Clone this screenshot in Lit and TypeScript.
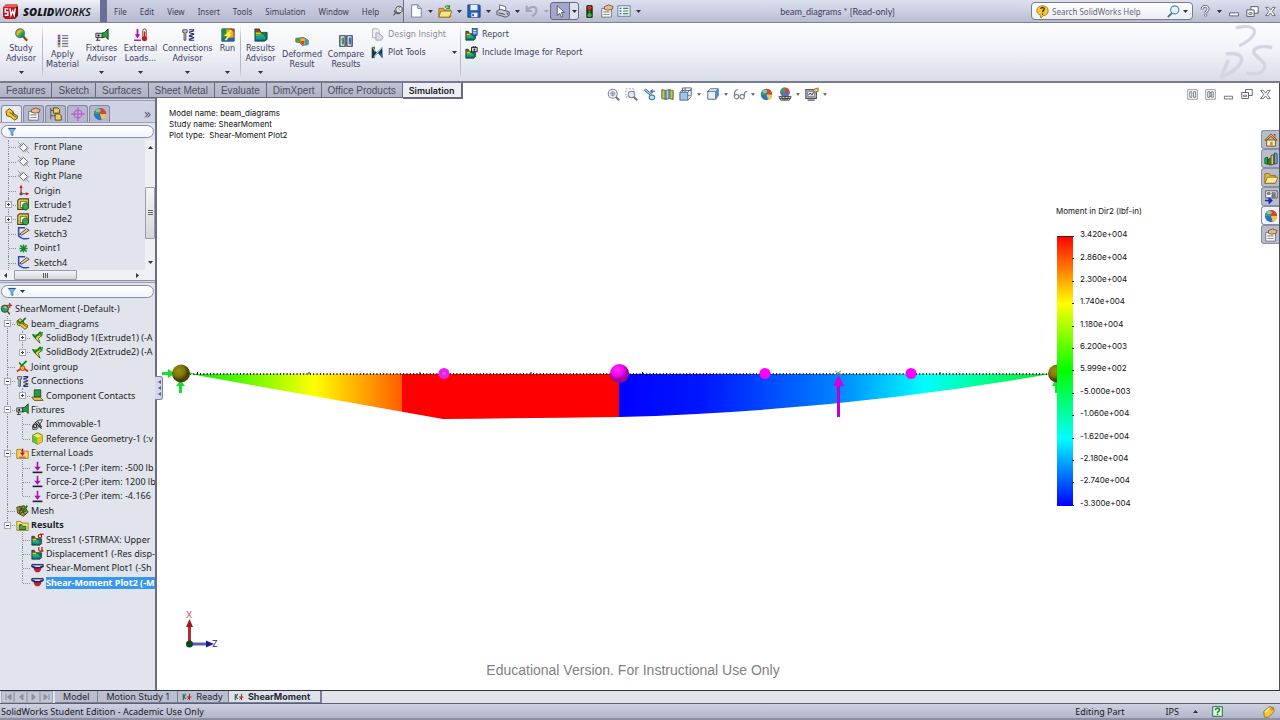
import { LitElement, html, svg, css, nothing, TemplateResult } from "lit";
import { customElement, property } from "lit/decorators.js";
import { classMap } from "lit/directives/class-map.js";

const rainbow = svg`<linearGradient id="rb" x1="0" y1="0" x2="1" y2="1"><stop offset="0" stop-color="#e02010"/><stop offset=".35" stop-color="#f5c800"/><stop offset=".6" stop-color="#20b040"/><stop offset="1" stop-color="#1040d0"/></linearGradient>`;
const plotBody = svg`<path d="M1 1h5l2 4h7v8l-3 2H1z" fill="#0c7a48" stroke="#123" stroke-width=".8"/><path d="M2 2h3l2 3H2z" fill="#e02010"/><path d="M2 5h5l2 2H2z" fill="#f7d000"/><path d="M2 7h8l2 3H2z" fill="#35c040"/><path d="M2 10h11v3H2z" fill="#1a90c8"/>`;
const plotSmall = svg`<path d="M1 4h3l2 3h7v6l-2 2H1z" fill="#0c7a48" stroke="#123" stroke-width=".8"/><path d="M2 5h2l1 2H2z" fill="#e02010"/><path d="M2 7h4l1 2H2z" fill="#f7d000"/><path d="M2 9h7l1 2H2z" fill="#35c040"/><path d="M2 11h9v2H2z" fill="#1a90c8"/>`;
const balls = svg`<circle cx="8" cy="8" r="7" fill="#2f6fd0"/><path d="M8 8V1a7 7 0 0 1 7 7z" fill="#e04038"/><path d="M8 8h7a7 7 0 0 1-5 6.700z" fill="#f0c840"/><path d="M8 8V1a7 7 0 0 0-7 7z" fill="#38a858"/><ellipse cx="6" cy="4" rx="3" ry="2" fill="#fff" opacity=".4"/>`;
const studyArrow = svg`<path d="M2 3v10M2 7l4 4M6 3l-3 5" stroke="#207048" stroke-width="1.800" fill="none"/><path d="M8 8h7M12 3v10M9 12l3-4" stroke="#b02030" stroke-width="1.600" fill="none"/>`;
const brick = svg`<path d="M1 5l4-3 4 3 1 3 4 2v3l-3 2-5-4-4-1z" fill="#f2cc30" stroke="#54430c"/><path d="M5 6l4 3M9 5v4l4 3" stroke="#54430c" fill="none"/>`;
const check = svg`<path d="M2 4l3 4L12 1" fill="none" stroke="#12801c" stroke-width="2.200"/>`;
const force = svg`<path d="M8 1v9" stroke="#b010b0" stroke-width="2"/><path d="M4 7h8l-4 5z" fill="#b010b0"/><path d="M2 14h12" stroke="#202030" stroke-width="2"/>`;
const funnel = svg`<path d="M2 2h12l-4.500 6v6l-3-1.500V8z" fill="#7db8ee" stroke="#2b62a8"/><path d="M3 2.500h10" stroke="#1d4d90" stroke-width="1.500"/>`;
const boltSpring = svg`<path d="M2 2h5v3H5.500v9h-2V5H2z" fill="#c8ccd4" stroke="#444"/><path d="M9 2h6M9 5l6-2M9 5l6 2M9 9l6-2M9 9l6 2M9 13l6-2M9 14h6" stroke="#223070" stroke-width="1.300" fill="none"/>`;
const fixture = svg`<path d="M1 6h8v5H1z" fill="#d0d8d0" stroke="#223"/><circle cx="4" cy="8.500" r="1.200"/><path d="M8 6l3-1 4-4v12l-3-3-4 1z" fill="#28a040" stroke="#0a3a18"/><path d="M1 14h5M3 11v3" stroke="#222"/>`;
const cube = svg`<path d="M2 5l3-3h9v8l-3 4H2z" fill="#e9f2fc" stroke="#49607e"/><path d="M2 5h9v9M11 5l3-3" fill="none" stroke="#49607e"/><path d="M11 5l3-3v8l-3 4z" fill="#4f8fd8"/>`;

const icons: Record<string, TemplateResult> = {
  logo: svg`<path d="M1 4l3-3h10l1 2v9l-3 3H3l-2-2z" fill="#b3121a"/><path d="M1 4l3-3h10l1 2-2 1z" fill="#e06060"/><path d="M13 4l2-1v9l-3 3z" fill="#7c0a10"/><path d="M6 5.500H3v3h2.500v3H2.500M7.500 5l1 6.500 1.500-4 1.500 4L12.500 5" fill="none" stroke="#fff" stroke-width="1.300"/>`,
  pin: svg`<circle cx="9.500" cy="6" r="4.500" fill="#e4e6ee" stroke="#555" stroke-width="1.300"/><circle cx="11" cy="5" r="2" fill="#fff" stroke="#777"/><path d="M3 7c1 4 4 5 8 4M5 10l-3 4" fill="none" stroke="#555" stroke-width="1.600"/>`,
  newDoc: svg`<path d="M3 1h7l4 4v10H3z" fill="#fdfeff" stroke="#5d7898"/><path d="M10 1v4h4" fill="#cfe0f2" stroke="#5d7898"/>`,
  open: svg`<path d="M1 5h5l1 2h7v8H1z" fill="#e8b93c" stroke="#8c6a14"/><path d="M3 8h13l-3 7H1z" fill="#fde287" stroke="#8c6a14"/><path d="M8 4c2-3 4-2 5 0M13 1v4H9.500" fill="none" stroke="#2a9a2a" stroke-width="1.600"/>`,
  save: svg`<path d="M1 1h13l1 1v13H1z" fill="#2e5fb4" stroke="#163a7c"/><path d="M4 1h8v6H4z" fill="#e6f0fb"/><path d="M5 10h7v5H5z" fill="#f4f6fa"/><path d="M6 11h2v3H6z" fill="#2e5fb4"/>`,
  print: svg`<path d="M4 1l7 2v5l-7-1z" fill="#fff" stroke="#667"/><path d="M1 8l4-2 10 3v4l-4 2-10-3z" fill="#c9ccd6" stroke="#444a5c"/><path d="M3 10l7 2" stroke="#333"/><circle cx="13" cy="11" r="1" fill="#2c70c0"/>`,
  undo: svg`<path d="M2 2v6h6M2 8C6 2 14 2 13 8c0 3-3 5-5 6" fill="none" stroke="#a2a6b8" stroke-width="2.400"/>`,
  cursor: svg`<path d="M4 1v12l3-3 2 5 2-1-2-5h4z" fill="#fff" stroke="#444a60"/>`,
  traffic: svg`<rect x="4" y="0" width="8" height="16" rx="2" fill="#26301e"/><circle cx="8" cy="3.500" r="2.600" fill="#e03020"/><circle cx="8" cy="8" r="1.600" fill="#6a6a20"/><circle cx="8" cy="12.500" r="2.600" fill="#30c040"/>`,
  props: svg`<path d="M2 5h11v10H2z" fill="#fbfbf4" stroke="#666b78"/><path d="M4 9h7M4 12h7" stroke="#8a8f9c" stroke-width="1.300"/><path d="M5 3l5-2 5 2-1 3-5 1-4-1z" fill="#e9b98c" stroke="#7a512c"/>`,
  options: svg`<path d="M1 2h14v12H1z" fill="#eef4fb" stroke="#54759c"/><path d="M7 5h6M7 8h6M7 11h6" stroke="#3e8e54" stroke-width="1.300"/><path d="M3 5h2M3 8h2M3 11h2" stroke="#3060a0" stroke-width="1.600"/>`,
  helpBall: svg`<path d="M8 1c4 0 7 2 7 6s-3 6-6 6l-3 3-1-4C2 11 1 9 1 7c0-4 3-6 7-6z" fill="#f6c73a" stroke="#9a7416"/><path d="M6 5c0-3 5-2 4 .5C9.500 7 8 7 8 9M8 10.500v1.500" fill="none" stroke="#3a2c08" stroke-width="1.600"/>`,
  lens: svg`<circle cx="9.500" cy="6" r="5" fill="#e8f2fc" stroke="#5b83ae" stroke-width="1.400"/><path d="M6 10l-5 5" stroke="#4b6a90" stroke-width="2.200"/>`,
  question: svg`<path d="M4 6c0-6 9-5 8 0-.5 2-3 2.500-3 5M9 12.500v2.500" fill="none" stroke="#555a6a" stroke-width="3.800"/><path d="M4 6c0-6 9-5 8 0-.5 2-3 2.500-3 4.500M9 13v1.500" fill="none" stroke="#fff" stroke-width="1.600"/>`,
  min: svg`<path d="M2 10.500h12v4H2z" fill="#fff" stroke="#555a6a" stroke-width="1.200"/>`,
  restore: svg`<path d="M6 2h9v8H6z" fill="#fff" stroke="#555a6a" stroke-width="1.200"/><path d="M1 6h9v8H1z" fill="#fff" stroke="#555a6a" stroke-width="1.200"/><path d="M3.500 9.500h4v2h-4z" fill="none" stroke="#555a6a"/>`,
  close: svg`<path d="M1 2h4l3 4 3-4h4l-4.500 6 4.500 6h-4l-3-4-3 4H1l4.500-6z" fill="#fff" stroke="#555a6a" stroke-width="1.200"/>`,
  paneL: svg`<path d="M1 1h14v14H1z" fill="#fff" stroke="#6a6f80"/><path d="M7 4H4v8h3zM9.500 4h3v8h-3z" fill="none" stroke="#6a6f80" stroke-width="1.300"/>`,
  paneR: svg`<path d="M1 1h14v14H1z" fill="#fff" stroke="#6a6f80"/><path d="M4 4h3v8H4zM9 4h3v8H9z" fill="none" stroke="#6a6f80" stroke-width="1.300"/><path d="M7 4l3 4-3 4" fill="none" stroke="#6a6f80"/>`,
  study: svg`<defs>${rainbow}</defs><circle cx="7" cy="6" r="5" fill="url(#rb)" stroke="#4a7c9c" stroke-width="1.400"/><path d="M10.500 9.500l4.500 5" stroke="#7a4a18" stroke-width="2.600"/>`,
  material: svg`<path d="M2 2h3M2 8h3" stroke="#c04030" stroke-width="2.400"/><path d="M2 5h3M2 11h3" stroke="#4060b0" stroke-width="2.400"/><path d="M2 14h3" stroke="#c8a020" stroke-width="2.400"/><path d="M7 2h7M7 5h7M7 8h7M7 11h7M7 14h7" stroke="#667" stroke-width="1.300"/>`,
  fixture,
  load: svg`<path d="M4 1v8" stroke="#b010b0" stroke-width="2"/><path d="M1 7h6l-3 5z" fill="#b010b0"/><path d="M0 14h8" stroke="#b010b0" stroke-width="1.600"/><rect x="10" y="1" width="4" height="10" rx="2" fill="#fff" stroke="#8a2020"/><circle cx="12" cy="12" r="3" fill="#c02020"/><path d="M12 4v8" stroke="#c02020" stroke-width="1.800"/>`,
  boltSpring,
  run: svg`<path d="M1 1h14v14H1z" fill="#e9b020" stroke="#234"/><path d="M1 1h5v14H1z" fill="#209048"/><path d="M1 11h14v4H1z" fill="#2060b8"/><path d="M14 1L6 8h4l-5 6" fill="none" stroke="#fff04a" stroke-width="2.200"/><path d="M10 1h5v4z" fill="#d04020"/>`,
  results: plotBody,
  deformed: svg`<path d="M1 5l9-1 5 3v5l-7 1-2-3-5-1z" fill="#f0b020" stroke="#555"/><path d="M1 5h5v4l-5-1z" fill="#30a850"/><path d="M6 8h5l-1 4-3-1z" fill="#e04020"/><path d="M11 6l4 1v5l-3 1z" fill="#2aa0c8"/>`,
  compare: svg`<path d="M1 2h6v12H1zM9 2h6v12H9z" fill="#fff" stroke="#233050" stroke-width="1.400"/><path d="M3 4h3v8H3z" fill="#2a9a60"/><path d="M11 4h3v8h-3z" fill="#2a70c0"/><path d="M3 5h2v2H3zM11 9h2v2h-2z" fill="#e06020"/>`,
  insight: svg`<path d="M2 1h6l2 2v9H2z" fill="#f1f2f6" stroke="#9a9eac"/><path d="M6 6h3l6 5-2 4H6z" fill="#d8dae2" stroke="#9a9eac"/>`,
  plotTools: svg`<path d="M1 1h4v14H1z" fill="#1c9048"/><path d="M1 2l6 6 7-7v14l-5-6-8 6z" fill="#18344a"/><path d="M1 1l4 3v4z" fill="#e0a020"/><path d="M9 9l5 6V9z" fill="#2a60c0"/><path d="M14 1L4 13" stroke="#9ad0e8" stroke-width="1.600"/>`,
  report: svg`${plotSmall}<path d="M9 0h6v9H9z" fill="#4a86d8" stroke="#1a3a78"/><path d="M10 3h4M10 6h4" stroke="#fff"/>`,
  imageReport: svg`${plotSmall}<rect x="8" y="2" width="7" height="5" fill="#ddd" stroke="#111"/><path d="M10 2V0h3v2" fill="none" stroke="#111"/><circle cx="11.500" cy="4.500" r="1.300" fill="#333"/>`,
  zoomFit: svg`<circle cx="7" cy="7" r="5.500" fill="#eef4fa" stroke="#7a8498" stroke-width="1.300"/><path d="M7 3.500v7M3.500 7h7M5 5h4v4H5z" stroke="#8a94a8" fill="none"/><path d="M11 11l4 4" stroke="#6a7488" stroke-width="2.400"/>`,
  zoomArea: svg`<path d="M1 1h10v10H1z" fill="none" stroke="#7a8498" stroke-dasharray="2 2"/><circle cx="8" cy="8" r="4" fill="#dce8f4" stroke="#7a8498" stroke-width="1.300"/><path d="M11 11l4 4" stroke="#6a7488" stroke-width="2.400"/>`,
  prevView: svg`<path d="M1 2l8 7M3 1l8 7" stroke="#3a7ab4" stroke-width="1.300"/><ellipse cx="11" cy="11.500" rx="3.500" ry="3" fill="#bfe0f6" stroke="#3a7ab4" stroke-width="1.300"/><path d="M15 4H10M12 2l-2.500 2L12 6" stroke="#4a5a78" fill="none" stroke-width="1.300"/>`,
  section: svg`<path d="M1 2l5 1 4-1 5 1v11l-5-1-4 1-5-1z" fill="#4f9088" stroke="#5a5020"/><path d="M3 3v10M13 3v10" stroke="#e4be30" stroke-width="2.400"/><path d="M8 3v10" stroke="#a8d0e8" stroke-width="2"/>`,
  orient: svg`<path d="M4 1h10v9H4z" fill="#f2f6fb" stroke="#5a6478"/><path d="M1 6h9v9H1z" fill="#9cc4ee" stroke="#49607e"/><path d="M1 6l4-4M10 6l4-4M10 15l4-4M7 1v5M4 4h10" stroke="#5a6478" fill="none"/>`,
  cube,
  glasses: svg`<circle cx="4" cy="11" r="2.500" fill="none" stroke="#7a8090" stroke-width="1.300"/><circle cx="10.500" cy="11" r="2.500" fill="none" stroke="#7a8090" stroke-width="1.300"/><path d="M1.500 10c0-4 1-7 4-7M13 10.500c0-3 0-6 3-5" fill="none" stroke="#7a8090" stroke-width="1.300"/>`,
  balls,
  scene: svg`<circle cx="8" cy="6" r="5.500" fill="#e04038"/><path d="M8 6V.5A5.500 5.500 0 0 0 2.500 6z" fill="#38a858"/><path d="M2.500 6h11l-2 4h-7z" fill="#4a78c8"/><path d="M1 11h14l-2 4H3z" fill="#fff" stroke="#333"/><path d="M4 11l2 4M8 11v4M12 11l-2 4M2 13h12" stroke="#333" stroke-width="1.100"/>`,
  viewSet: svg`<path d="M1 3h12v10H1z" fill="#c9d2de" stroke="#4a5464" stroke-width="1.300"/><path d="M3 5h8v6H3z" fill="#eef0f4" stroke="#777"/><path d="M4 9l2-2 2 2 2-3M3 15h8" fill="none" stroke="#4a5464" stroke-width="1.200"/><path d="M9 3l6-2v4l-4 1z" fill="#f0cc80" stroke="#7a612c"/>`,
  brick,
  config: svg`<path d="M2 1v13M2 4h4M2 10h5" stroke="#445" fill="none"/><path d="M5 1h5l2 2v4H5z" fill="#e8d060" stroke="#54430c"/><path d="M7 8h5l2 2v5H7z" fill="#e8d060" stroke="#54430c"/>`,
  dim: svg`<circle cx="8" cy="8" r="4.500" fill="none" stroke="#c060d8" stroke-width="1.500"/><path d="M8 0v16M0 8h16" stroke="#c060d8" stroke-width="1.500"/>`,
  funnel,
  plane: svg`<path d="M8 3l5 5-5 5-5-5z" fill="#f4f6fa" stroke="#555"/><path d="M1 1l5 5M10 10l5 5M1 8l6-6M9 14l6-6" stroke="#777" stroke-width=".8"/>`,
  origin: svg`<path d="M5 3v9h8" fill="none" stroke="#c01c1c" stroke-width="1.400"/><path d="M5 1L3 5h4zM15 12l-4-2v4z" fill="#c01c1c"/><circle cx="5" cy="12" r="2" fill="#555"/>`,
  extrude: svg`<path d="M1 3l2-2h11v10l-3 3H1z" fill="#f3dd78" stroke="#4c420e" stroke-width="1.400"/><path d="M4 4h8v8H4z" fill="#fff8c8" stroke="#4c420e"/><path d="M7 8l3-2 4 2v5l-3 2-4-2z" fill="#38a848" stroke="#0e5020"/>`,
  sketch: svg`<path d="M10 1H2v10c4 4 9 4 13 3" fill="none" stroke="#2a48b8" stroke-width="1.800"/><path d="M3 9l9-7 3 2-9 6z" fill="#f0cc80" stroke="#333"/>`,
  point: svg`<path d="M8 3v10M3 8h10M4 4l8 8M12 4l-8 8" stroke="#1a8a30" stroke-width="1.800"/>`,
  studyRoot: svg`<circle cx="6" cy="7" r="4.500" fill="#2aa06a" stroke="#333"/><path d="M3 5l4-1 2 3z" fill="#f0d020"/><path d="M9 10l3 4" stroke="#703c10" stroke-width="2"/><path d="M9 3h6M12 0v6" stroke="#c02020" stroke-width="1.600"/>`,
  part: svg`${brick}<g>${check}</g>`,
  solid: svg`<path d="M3 5h11l-5 4 2 6-5-5z" fill="#f2d840" stroke="#3c4c10"/><path d="M10 2l5-1-2 6z" fill="#2a9a30"/>${check}`,
  joint: svg`<circle cx="8" cy="10" r="3" fill="#f0b020" stroke="#843"/><path d="M1 14l5-3M15 14l-5-3" stroke="#d04020" stroke-width="2.400"/><path d="M4 3l3 4 6-6" fill="none" stroke="#12801c" stroke-width="2"/>`,
  contact: svg`<path d="M4 1h8v9H4z" fill="#2a9a40" stroke="#0e4a1c"/><path d="M1 10h10l4 4H4z" fill="#e8c850" stroke="#54430c"/>`,
  immovable: svg`<path d="M2 9l6-6 6-1-2 4-5 8-5 0z" fill="#ddd" stroke="#333"/><circle cx="5" cy="10" r="2" fill="none" stroke="#222" stroke-width="1.400"/><path d="M8 4l5 7M5 5l8 8" stroke="#222" stroke-width="1.300"/>`,
  refGeo: svg`<path d="M2 4l6-3 6 3v8l-6 3-6-3z" fill="#f0ec60" stroke="#4c6010"/><path d="M8 7l6-3v8l-6 3z" fill="#e8c820"/><path d="M2 4l6 3v8l-6-3z" fill="#68c038"/>`,
  folderLoad: svg`<path d="M1 3h5l1 2h8v9H1z" fill="#f8d858" stroke="#9a7414"/><path d="M8 2v6" stroke="#c01060" stroke-width="2"/><path d="M5 7h6l-3 4z" fill="#c01060"/><path d="M4 12.500h8" stroke="#c01060"/>`,
  force,
  mesh: svg`<path d="M1 4l9-2 5 8-6 5-7-4z" fill="#a0983c" stroke="#33300c"/><path d="M4 3l7 10M3 8l9-3M4 12l9-4M8 3l-4 8" stroke="#33300c"/><path d="M7 6l2 2 5-6" fill="none" stroke="#12801c" stroke-width="2.200"/>`,
  folderRes: svg`<path d="M1 3h5l1 2h8v9H1z" fill="#f8e070" stroke="#9a7414"/><path d="M4 7h3l1 2h4v4H4z" fill="#40a850" stroke="#0c5024"/>`,
  stress: svg`${plotSmall}<circle cx="11" cy="4" r="2" fill="#fff" stroke="#c01818" stroke-width="1.600"/><path d="M11 1.500h4.500" stroke="#c01818" stroke-width="1.600"/>`,
  disp: svg`${plotSmall}<path d="M9.500 0v3c0 3 4 3 4 0V0v5h2" fill="none" stroke="#c01818" stroke-width="1.600"/>`,
  shear: svg`<path d="M1 4.500h14" stroke="#888"/><path d="M1 3v3h3l4 2 4-2h3V3z" fill="none" stroke="#1c2470" stroke-width="1.200"/><path d="M3 6h10c0 9-10 9-10 0z" fill="#c02028"/><path d="M1 5l4 2 3 0 3 0 4-2" fill="none" stroke="#1c2470" stroke-width="1.800"/>`,
  home: svg`<path d="M3 8h10v7H3z" fill="#fdf0b8" stroke="#6a4a14"/><path d="M1 8l7-7 7 7-1 1-6-5-6 5z" fill="#f0b838" stroke="#6a4a14"/><path d="M11 1h2v4z" fill="#c02020"/><path d="M7 10h3v5H7z" fill="#c89040"/>`,
  library: svg`<path d="M1 7l3-1v8l-3-1zM5 8l2-1v8l-2-1z" fill="#38a848" stroke="#0e5020"/><path d="M8 4l3-1v11l-3 1z" fill="#f0c838" stroke="#54430c"/><path d="M12 1l3 1v11l-3 1z" fill="#68a8e0" stroke="#204880"/>`,
  folder: svg`<path d="M1 3h5l1 2h6v9H1z" fill="#e8b93c" stroke="#8c6a14"/><path d="M4 7h12l-3 7H1z" fill="#fdea9c" stroke="#8c6a14"/>`,
  palette: svg`<path d="M2 1h13v8H2z" fill="#fff" stroke="#445"/><path d="M4 3h3v2H4zM9 3h4v2H9zM9 6h4v2H9z" fill="#9ab0a0" stroke="#445" stroke-width=".8"/><path d="M1 12h7M6 9.500L9 12l-3 3z" stroke="#1a30b0" stroke-width="1.600" fill="#1a30b0"/>`,
  tabStudy: studyArrow,
  helpBox: svg`<path d="M1 1h14v14H1z" fill="#e4f6e4" stroke="#28684c" stroke-width="1.400"/><path d="M5 6c0-4 7-3 6 0-.5 2-3 2-3 4M8 11v2" fill="none" stroke="#188a2c" stroke-width="2.200"/>`,
  tag: svg`<path d="M2 8l7-6 5 1 1 5-7 7-5 0z" fill="#f4c634" stroke="#8c6a14"/><circle cx="12" cy="5" r="1.300" fill="#fff" stroke="#8c6a14"/><path d="M4 9l5-5" stroke="#fff0a0" stroke-width="1.600"/>`,
};

@customElement("sw-icon")
class SwIcon extends LitElement {
  @property() name = "";
  @property({ type: Number }) size = 13;
  static styles = css`
    :host { display: inline-flex; flex: none; }
    svg { display: block; }
  `;
  render() {
    return html`<svg viewBox="0 0 16 16" width=${this.size} height=${this.size} aria-hidden="true">${icons[this.name]}</svg>`;
  }
}

const icon = (name: string, size = 13) => html`<sw-icon name=${name} size=${size}></sw-icon>`;
const caret = html`<svg class="caret" width="5" height="3" viewBox="0 0 5 3" aria-hidden="true"><path d="M0 0h5L2.500 3z" fill="currentColor"/></svg>`;

type Node = { text: string; icon: string; level: number; box?: "+" | "-"; guide?: boolean; bold?: boolean; selected?: boolean; last?: boolean };

@customElement("sw-tree")
class SwTree extends LitElement {
  @property({ attribute: false }) nodes: Node[] = [];
  static styles = css`
    :host { display: grid; grid-auto-rows: 1fr; overflow: hidden; }
    .row { display: flex; align-items: center; min-height: 0; white-space: nowrap; font: 9px/12px "Noto Sans", sans-serif; color: #1c1e26; }
    .rail { align-self: stretch; width: 15px; flex: none; display: flex; align-items: center; justify-content: center; position: relative; }
    .rail.line::before { content: ""; position: absolute; left: 7px; top: 0; bottom: 0; border-left: 1px dotted #8a8e9a; }
    .rail.line.end::before { bottom: 50%; }
    .rail.stub::after { content: ""; position: absolute; left: 8px; right: 0; top: 50%; border-top: 1px dotted #8a8e9a; }
    .box { position: relative; z-index: 1; box-sizing: border-box; width: 7px; height: 7px; border: 1px solid #a4a8b4; background: #fff; padding: 0; display: grid; place-items: center; }
    .box svg { display: block; }
    .rail + sw-icon { margin-left: 1px; }
    .label { margin-left: 2px; }
    :host(.roomy) .label { margin-left: 4px; }
    .bold { font-weight: 700; }
    .selected .label { background: #3797f0; color: #fff; font-weight: 700; flex: 1; }
  `;
  private rail(n: Node, depth: number) {
    const own = depth === n.level - 1;
    return html`<span class=${classMap({ rail: true, line: own || n.guide !== false, stub: own, end: own && !!n.last })}>
      ${own && n.box
        ? html`<button class="box" aria-label=${n.box === "+" ? "Expand" : "Collapse"}><svg width="5" height="5" viewBox="0 0 5 5"><path d=${n.box === "+" ? "M1 2.500h3M2.500 1v3" : "M1 2.500h3"} stroke="#445" fill="none"/></svg></button>`
        : nothing}
    </span>`;
  }
  render() {
    return this.nodes.map(
      (n) => html`<div class=${classMap({ row: true, selected: !!n.selected, bold: !!n.bold })}>
        ${Array.from({ length: n.level }, (_, d) => this.rail(n, d))}${icon(n.icon, 13)}<span class="label">${n.text}</span>
      </div>`
    );
  }
}

const featureTree: Node[] = [
  { text: "Front Plane", icon: "plane", level: 1 },
  { text: "Top Plane", icon: "plane", level: 1 },
  { text: "Right Plane", icon: "plane", level: 1 },
  { text: "Origin", icon: "origin", level: 1 },
  { text: "Extrude1", icon: "extrude", level: 1, box: "+" },
  { text: "Extrude2", icon: "extrude", level: 1, box: "+" },
  { text: "Sketch3", icon: "sketch", level: 1 },
  { text: "Point1", icon: "point", level: 1 },
  { text: "Sketch4", icon: "sketch", level: 1 },
];

const studyTree: Node[] = [
  { text: "ShearMoment (-Default-)", icon: "studyRoot", level: 0 },
  { text: "beam_diagrams", icon: "part", level: 1, box: "-" },
  { text: "SolidBody 1(Extrude1) (-A", icon: "solid", level: 2, box: "+" },
  { text: "SolidBody 2(Extrude2) (-A", icon: "solid", level: 2, box: "+", last: true },
  { text: "Joint group", icon: "joint", level: 1 },
  { text: "Connections", icon: "boltSpring", level: 1, box: "-" },
  { text: "Component Contacts", icon: "contact", level: 2, box: "+", last: true },
  { text: "Fixtures", icon: "fixture", level: 1, box: "-" },
  { text: "Immovable-1", icon: "immovable", level: 2 },
  { text: "Reference Geometry-1 (:v", icon: "refGeo", level: 2, last: true },
  { text: "External Loads", icon: "folderLoad", level: 1, box: "-" },
  { text: "Force-1 (:Per item: -500 lb", icon: "force", level: 2 },
  { text: "Force-2 (:Per item: 1200 lb", icon: "force", level: 2 },
  { text: "Force-3 (:Per item: -4.166", icon: "force", level: 2, last: true },
  { text: "Mesh", icon: "mesh", level: 1 },
  { text: "Results", icon: "folderRes", level: 1, box: "-", bold: true, last: true },
  { text: "Stress1 (-STRMAX: Upper", icon: "stress", level: 2, guide: false },
  { text: "Displacement1 (-Res disp-", icon: "disp", level: 2, guide: false },
  { text: "Shear-Moment Plot1 (-Sh", icon: "shear", level: 2, guide: false },
  { text: "Shear-Moment Plot2 (-M", icon: "shear", level: 2, guide: false, last: true, selected: true },
];

const legend = ["3.420e+004", "2.860e+004", "2.300e+004", "1.740e+004", "1.180e+004", "6.200e+003", "5.999e+002", "-5.000e+003", "-1.060e+004", "-1.620e+004", "-2.180e+004", "-2.740e+004", "-3.300e+004"];

@customElement("app-root")
class AppRoot extends LitElement {
  static styles = css`
    :host { display: flex; flex-direction: column; height: 100vh; overflow: hidden; color: #3a3d5e; font: 9px "DejaVu Sans Condensed", sans-serif; --edge: #666a7c; }
    button, input { font: inherit; color: inherit; margin: 0; }
    button { background: none; border: 0; padding: 0; display: flex; align-items: center; white-space: nowrap; }
    .caret { flex: none; color: #2c3044; }

    .top { display: flex; align-items: center; height: 22px; flex: none; border-bottom: 1px solid #7c8094; background: linear-gradient(#dcdfee, #cdd0e2 50%, #b9bccf); }
    .brand { display: flex; align-items: center; gap: 4px; width: 100px; height: 22px; box-sizing: border-box; padding-left: 2px; background: linear-gradient(#f0f1f8, #d0d3e2 60%, #c0c3d4); color: #15161c; font: italic 600 11px "Open Sans", sans-serif; }
    .brand b { font-weight: 800; }
    .strip { width: 7px; height: 22px; background: #6b6f98; }
    .menus { display: flex; align-items: center; gap: 13px; width: 297px; height: 22px; box-sizing: border-box; padding: 0 4px 0 7px; border-right: 1px solid #6c7084; background: linear-gradient(#cfd2e4, #b8bbcf); font: 8px "Noto Sans", sans-serif; }
    .menus sw-icon { margin-left: auto; }
    .quick { display: flex; align-items: center; height: 22px; padding-left: 5px; }
    .split { width: 29px; gap: 5px; }
    .split.off .caret { color: #a0a4b4; }
    .pick { box-sizing: border-box; width: 29px; height: 18px; margin: 0 4px 0 -4px; border: 1px solid #666a88; border-radius: 3px; background: linear-gradient(90deg, #a4a8c8 18px, #666a88 18px, #666a88 19px, #dfe1ee 19px); padding-left: 3px; gap: 5px; }
    .single { width: 17px; }
    .title { flex: 1; text-align: center; font: 9px Lato, sans-serif; padding-right: 2px; }
    .search { display: flex; align-items: center; gap: 3px; box-sizing: border-box; width: 162px; height: 18px; border: 1px solid #777b8e; border-radius: 4px; background: linear-gradient(#fff, #eceef5); padding: 0 4px; }
    .search input { flex: 1; min-width: 0; border: 0; padding: 0; outline: 0; background: none; font: 8px "Noto Sans", sans-serif; }
    .search input::placeholder { color: #666a76; opacity: 1; }
    .window { display: flex; align-items: center; gap: 6px; padding: 0 4px 0 6px; }

    .ribbon { display: flex; height: 58px; flex: none; border-bottom: 2px solid #777b90; background: linear-gradient(#fcfcfe, #f3f4f9 45%, #d9dbe7); }
    .big { flex-direction: column; justify-content: flex-start; box-sizing: border-box; padding: 5px 0 7px; line-height: 10px; text-align: center; height: 58px; }
    .big .words { margin-top: 1px; flex: 1; }
    .big.low { padding-top: 11px; }
    .w25 { width: 25px; } .w39 { width: 39px; } .w42 { width: 42px; } .w44 { width: 44px; } .w55 { width: 55px; }
    .rule { width: 1px; flex: none; background: linear-gradient(#fff, #b4b7c8 30%, #b4b7c8 80%, #eee); }
    .stack { display: flex; flex-direction: column; gap: 4px; padding: 4px 0 0 4px; }
    .stack button { height: 14px; gap: 4px; }
    .stack.tools { width: 92px; padding-left: 3px; box-sizing: border-box; }
    .stack .caret { margin-left: auto; margin-right: 3px; }
    .off { color: #8a8d98; }
    .ds { margin-left: auto; margin-right: 6px; align-self: center; }

    .work { flex: 1; min-height: 0; display: grid; grid-template: 15px 1fr / 157px 1fr; border-bottom: 1px solid #30343c; background: #fff; }
    .tabs { grid-area: 1 / 1 / 2 / 3; z-index: 2; justify-self: start; display: flex; font: 10px "Liberation Sans", sans-serif; }
    .tabs button { justify-content: center; height: 15px; box-sizing: border-box; padding: 0 6px; border-right: 1px solid var(--edge); border-bottom: 1px solid var(--edge); background: linear-gradient(#bfc2d2, #b0b3c6); color: #4a4e5c; }
    .tabs button.on { height: 16px; font: 600 9px Inter, sans-serif; background: #eceef4; color: #1a1c26; border-right-width: 2px; border-bottom: 2px solid var(--edge); }

    .panel { grid-area: 2 / 1; z-index: 2; position: relative; display: flex; flex-direction: column; box-sizing: border-box; border-right: 2px solid #6a6e80; background: #e1e4ec; }
    .sash { height: 3px; flex: none; box-sizing: border-box; border-top: 1px solid #8c90a4; border-bottom: 1px solid #9a9eb0; background: #d4d7e2; }
    .views { display: flex; gap: 1px; align-items: flex-end; height: 21px; flex: none; padding: 0 1px; background: #cfd2e4; border-bottom: 1px solid #9ca0b2; }
    .views button { width: 21px; height: 17px; box-sizing: border-box; justify-content: center; border: 1px solid #8588a0; border-bottom: 0; border-radius: 3px 3px 0 0; background: #b6b9cd; }
    .views button.on { background: #e9ebf2; }
    .views .more { margin-left: auto; width: 13px; border: 0; background: none; font-size: 14px; color: #4a4e70; }
    .filter { display: flex; align-items: center; gap: 3px; height: 13px; flex: none; box-sizing: border-box; margin: 2px 1px; padding: 0 5px; border: 1px solid #888ca2; border-radius: 7px; background: linear-gradient(#fff, #f2f4fa); }
    .filter input { flex: 1; min-width: 0; width: 20px; border: 0; outline: 0; padding: 0; height: 9px; background: none; }
    .feature { display: flex; height: 130px; flex: none; }
    .feature sw-tree { flex: 1; padding-left: 1px; }
    .vbar { width: 10px; display: flex; flex-direction: column; align-items: center; background: #eff0f4; padding: 6px 0 6px; box-sizing: border-box; }
    .vbar .thumb { width: 10px; height: 52px; margin: 38px 0 auto; }
    .thumb { box-sizing: border-box; border: 1px solid #9a9da8; border-radius: 1px; background: linear-gradient(#f4f5f8, #d4d6de); display: grid; place-items: center; }
    .hbar { height: 10px; flex: none; display: flex; align-items: center; background: #eff0f4; padding: 0 16px 0 4px; }
    .hbar .thumb { width: 63px; height: 10px; margin: 0 auto 0 7px; }
    .study { height: 288px; flex: none; margin-top: 2px; }
    .grip { position: absolute; left: 155px; top: 278px; width: 8px; height: 24px; box-sizing: border-box; border: 1px solid #7e82a0; border-left: 0; border-radius: 0 3px 3px 0; background: #d5d8e6; justify-content: center; }

    .view { grid-area: 1 / 1 / 3 / 3; position: relative; overflow: hidden; border-right: 1px solid #4a4e56; font: 8px Inter, sans-serif; color: #111; }
    .hud { position: absolute; top: 4px; left: 607px; display: flex; gap: 5px; }
    .hud button { gap: 4px; height: 14px; }
    .hud .caret { color: #555; width: 4px; }
    .doc { position: absolute; top: 5px; right: 8px; display: flex; gap: 7px; }
    .info { position: absolute; left: 169px; top: 25px; line-height: 11px; white-space: pre; margin: 0; }
    .plot { position: absolute; left: 157px; top: 272px; }
    .legend { position: absolute; top: 123px; right: 137px; width: 86px; }
    .legend .cap { line-height: 11px; white-space: nowrap; }
    .scale { display: flex; gap: 6px; margin-top: 6px; }
    .bar { width: 17px; height: 270px; margin-top: 13px; margin-left: 1px; flex: none; }
    .vals { display: grid; grid-auto-rows: 1fr; height: 291px; align-items: center; }
    .triad { position: absolute; left: 180px; bottom: 39px; }
    .edu { position: absolute; left: 0; right: 13px; bottom: 11px; text-align: center; font: 14px/17px "Liberation Sans", sans-serif; color: #808080; }
    .task { position: absolute; right: 0; top: 47px; display: flex; flex-direction: column; }
    .task button { box-sizing: border-box; width: 18px; height: 19px; justify-content: center; border: 1px solid #8a8ea2; border-right: 0; border-radius: 3px 0 0 3px; background: #b9bccd; }
    .task button.on { background: #f2f3f8; }

    .sheets { display: flex; height: 12px; flex: none; background: #e1e4ec; font: 9px Inter, sans-serif; color: #262a36; }
    .pager { display: flex; width: 55px; box-sizing: border-box; padding-left: 1px; }
    .pager button { width: 13px; height: 12px; justify-content: center; box-sizing: border-box; border: 1px solid #a4a8b8; background: #c2c5d4; color: #8c90a4; }
    .sheets > button { height: 12px; box-sizing: border-box; padding: 0 8px; gap: 4px; border: 1px solid #7a7e92; border-top: 0; border-left-width: 0; background: #bbbecf; }
    .sheets > button.study-tab { padding: 0 5px 0 4px; }
    .sheets > button.on { background: #dfe1ea; font-weight: 700; padding: 0 10px 0 5px; border-right-width: 2px; }
    .status { display: flex; align-items: center; height: 14px; flex: none; border-top: 1px solid #5c6074; border-bottom: 2px solid #8b8fa0; background: linear-gradient(#cdd0df, #b4b7ca); font: 9px "Noto Sans", sans-serif; color: #15171e; padding: 0 5px 0 1px; }
    .status .push { margin-left: auto; margin-right: 41px; }
    .status .units { gap: 14px; margin-right: 14px; }
    .status .help { margin-right: 39px; }
    .flip { transform: rotate(180deg); display: flex; }
  `;

  private big(text: string[], name: string, width: string, drop = true) {
    return html`<button class="big ${width} ${drop ? "" : "low"}">${icon(name, 14)}<span class="words">${text.map((t, i) => html`${i ? html`<br />` : nothing}${t}`)}</span>${drop ? caret : nothing}</button>`;
  }

  private quick(name: string, cls = "") {
    return html`<button class="split ${cls}" aria-label=${name}>${icon(name, 14)}${caret}</button>`;
  }

  private plot() {
    return html`<svg class="plot" width="902" height="70" viewBox="157 355 902 70" role="img" aria-label="Moment diagram">
      <defs>
        <linearGradient id="left" gradientUnits="userSpaceOnUse" x1="190" y1="0" x2="619" y2="0">
          <stop offset="0" stop-color="#10e010" /><stop offset=".1" stop-color="#48f800" /><stop offset=".29" stop-color="#ffff00" /><stop offset=".4" stop-color="#ffa800" /><stop offset=".494" stop-color="#ff5c00" /><stop offset=".495" stop-color="#ff0000" />
        </linearGradient>
        <linearGradient id="right" gradientUnits="userSpaceOnUse" x1="619" y1="0" x2="1050" y2="0">
          <stop offset="0" stop-color="#0000ff" /><stop offset=".2" stop-color="#0018ff" /><stop offset=".5" stop-color="#0080ff" /><stop offset=".71" stop-color="#00ffff" /><stop offset=".87" stop-color="#00ff80" /><stop offset="1" stop-color="#10e020" />
        </linearGradient>
        <radialGradient id="olive" cx=".38" cy=".35"><stop offset="0" stop-color="#9a8c18" /><stop offset=".6" stop-color="#857808" /><stop offset="1" stop-color="#4a4204" /></radialGradient>
        <radialGradient id="pink" cx=".4" cy=".3"><stop offset="0" stop-color="#ff30ff" /><stop offset=".7" stop-color="#f000f0" /><stop offset="1" stop-color="#a000a0" /></radialGradient>
      </defs>
      <path d="M190 374H619V417Q530 418 443 419z" fill="url(#left)" />
      <path d="M619 374H1050Q840 411 619 417z" fill="url(#right)" />
      <path d="M190 374H1050" stroke="#111" stroke-width="2" stroke-dasharray="1 2.330" />
      <path d="M197.500 372v2M309 372v2M420 372v2M531 372v2M642.500 372v2M940 372v2" stroke="#111" />
      <path d="M162 373.500h10M180.500 393v-11" stroke="#18e030" stroke-width="3" />
      <path d="M168 369l7 4.500-7 4.500zM176 386l4.500-6 4.500 6zM187 371l6 2.500-6 2.500zM1052 386l4-7v7z" fill="#18e030" />
      <path d="M1056 380v13" stroke="#18e030" stroke-width="2" />
      <circle cx="181" cy="373.500" r="9" fill="url(#olive)" />
      <circle cx="1057" cy="373.500" r="9" fill="url(#olive)" />
      <circle cx="619.500" cy="373.500" r="9.500" fill="url(#pink)" />
      <circle cx="444" cy="373.500" r="5.500" fill="#f018f0" /><circle cx="444" cy="373.500" r="2" fill="#c85ac8" />
      <circle cx="765" cy="373.500" r="5.500" fill="#ff00ff" />
      <circle cx="911" cy="373.500" r="5.500" fill="#ff00ff" />
      <path d="M838.500 417V384" stroke="#c000d0" stroke-width="3" /><path d="M833 386l5.500-11 5.500 11z" fill="#d000e0" />
      <path d="M835 371l6 4M841 371l-6 4" stroke="#888" />
    </svg>`;
  }

  private legend() {
    return html`<div class="legend">
      <div class="cap">Moment in Dir2 (lbf-in)</div>
      <div class="scale">
        <svg class="bar" viewBox="0 0 17 270" preserveAspectRatio="none" aria-hidden="true">
          <defs><linearGradient id="spec" x1="0" y1="0" x2="0" y2="1"><stop offset="0" stop-color="#ff0000" /><stop offset=".25" stop-color="#ffff00" /><stop offset=".5" stop-color="#00ff00" /><stop offset=".75" stop-color="#00ffff" /><stop offset="1" stop-color="#0000ff" /></linearGradient></defs>
          <rect width="16" height="270" fill="url(#spec)" />
          <path d="M0 .5h17" stroke="#501010" />
          ${legend.map((_, i) => svg`<path d="M15 ${Math.round(i * 22.4) + 0.5}h2" stroke="#222"/>`)}
        </svg>
        <div class="vals">${legend.map((v) => html`<span>${v}</span>`)}</div>
      </div>
    </div>`;
  }

  render() {
    return html`
      <header class="top">
        <div class="brand">${icon("logo", 17)}<span><b>SOLID</b>WORKS</span></div>
        <div class="strip"></div>
        <nav class="menus">${["File", "Edit", "View", "Insert", "Tools", "Simulation", "Window", "Help"].map((m) => html`<button>${m}</button>`)}${icon("pin", 12)}</nav>
        <div class="quick">
          ${this.quick("newDoc")}${this.quick("open")}${this.quick("save")}${this.quick("print")}${this.quick("undo", "off")}
          <button class="pick" aria-label="Select">${icon("cursor", 13)}${caret}</button>
          <button class="single" aria-label="Rebuild">${icon("traffic", 13)}</button>
          <button class="single" aria-label="File properties">${icon("props", 14)}</button>
          ${this.quick("options")}
        </div>
        <div class="title">beam_diagrams * [Read-only]</div>
        <div class="search">${icon("helpBall", 13)}<input type="search" aria-label="Search" placeholder="Search SolidWorks Help" />${icon("lens", 13)}${caret}</div>
        <div class="window">
          <button aria-label="Help">${icon("question", 12)}</button>${caret}
          <button aria-label="Minimize">${icon("min", 12)}</button><button aria-label="Restore">${icon("restore", 13)}</button><button aria-label="Close">${icon("close", 11)}</button>
        </div>
      </header>

      <section class="ribbon">
        ${this.big(["Study", "Advisor"], "study", "w42")}
        <div class="rule"></div>
        ${this.big(["Apply", "Material"], "material", "w39", false)}
        ${this.big(["Fixtures", "Advisor"], "fixture", "w39")}
        ${this.big(["External", "Loads..."], "load", "w39")}
        ${this.big(["Connections", "Advisor"], "boltSpring", "w55")}
        ${this.big(["Run"], "run", "w25")}
        <div class="rule"></div>
        ${this.big(["Results", "Advisor"], "results", "w39")}
        ${this.big(["Deformed", "Result"], "deformed", "w44", false)}
        ${this.big(["Compare", "Results"], "compare", "w44", false)}
        <div class="stack tools">
          <button class="off">${icon("insight")}Design Insight</button>
          <button>${icon("plotTools")}Plot Tools${caret}</button>
        </div>
        <div class="rule"></div>
        <div class="stack">
          <button>${icon("report")}Report</button>
          <button>${icon("imageReport")}Include Image for Report</button>
        </div>
        <svg class="ds" width="56" height="54" viewBox="0 0 56 54" fill="none" stroke="#d3d6e2" aria-hidden="true">
          <path d="M18 3c9-3 21-2 18 6-2 5-9 9-15 12" stroke-width="3" />
          <path d="M8 29c12-2 19 2 14 10S6 50 3 53l7-18" stroke-width="3.500" />
          <path d="M54 23c-9-3-20-1-18 5 2 5 14 9 10 16-3 5-12 5-18 4" stroke-width="3.500" />
        </svg>
      </section>

      <main class="work">
        <div class="tabs">
          ${["Features", "Sketch", "Surfaces", "Sheet Metal", "Evaluate", "DimXpert", "Office Products", "Simulation"].map((t) => html`<button class=${classMap({ on: t === "Simulation" })}>${t}</button>`)}
        </div>

        <aside class="panel">
          <div class="sash"></div>
          <div class="views">
            ${["brick", "props", "config", "dim", "balls"].map((n, i) => html`<button class=${classMap({ on: i === 0 })} aria-label=${n}>${icon(n, 14)}</button>`)}
            <button class="more" aria-label="More">»</button>
          </div>
          <div class="filter">${icon("funnel", 10)}<input aria-label="Filter features" /></div>
          <div class="feature">
            <sw-tree class="roomy" .nodes=${featureTree}></sw-tree>
            <div class="vbar"><span class="flip">${caret}</span><div class="thumb"><svg width="5" height="6"><path d="M0 .5h5M0 2.500h5M0 4.500h5" stroke="#666" /></svg></div>${caret}</div>
          </div>
          <div class="hbar"><svg width="3" height="5"><path d="M3 0v5L0 2.500z" fill="#333" /></svg><div class="thumb"><svg width="6" height="5"><path d="M.5 0v5M2.500 0v5M4.500 0v5" stroke="#555" /></svg></div><svg width="3" height="5"><path d="M0 0v5l3-2.500z" fill="#333" /></svg></div>
          <div class="sash"></div>
          <div class="filter">${icon("funnel", 10)}${caret}<input aria-label="Filter study" /></div>
          <sw-tree class="study" .nodes=${studyTree}></sw-tree>
          <button class="grip" aria-label="Collapse panel"><svg width="4" height="18"><path d="M4 1v4L1 3zM4 7v4L1 9zM4 13v4l-3-2z" fill="#5a5e80" /></svg></button>
        </aside>

        <section class="view">
          <div class="hud">
            ${["zoomFit", "zoomArea", "prevView", "section"].map((n) => html`<button aria-label=${n}>${icon(n, 13)}</button>`)}
            ${["orient", "cube", "glasses"].map((n) => html`<button aria-label=${n}>${icon(n, 14)}${caret}</button>`)}
            <button aria-label="Appearance">${icon("balls", 13)}</button>
            ${["scene", "viewSet"].map((n) => html`<button aria-label=${n}>${icon(n, 14)}${caret}</button>`)}
          </div>
          <div class="doc">
            ${["paneL", "paneR", "min", "restore", "close"].map((n) => html`<button aria-label=${n}>${icon(n, n === "restore" ? 12 : 11)}</button>`)}
          </div>
          <p class="info">Model name: beam_diagrams
Study name: ShearMoment
Plot type:  Shear-Moment Plot2</p>
          ${this.plot()}
          ${this.legend()}
          <svg class="triad" width="42" height="44" viewBox="180 607 42 44" role="img" aria-label="Axes">
            <path d="M189.500 642V624" stroke="#b03030" stroke-width="3" /><path d="M186 627l3.500-8 3.500 8z" fill="#a01818" />
            <path d="M191 644h16" stroke="#5860b0" stroke-width="3" /><path d="M206 640.500l8 3.500-8 3.500z" fill="#1818a0" />
            <circle cx="189.500" cy="644" r="3.500" fill="#0c4a14" />
            <text x="186" y="618" font-size="9" fill="#c05050">X</text><text x="212" y="647" font-size="9" fill="#2020a0">Z</text>
          </svg>
          <div class="edu">Educational Version. For Instructional Use Only</div>
          <div class="task">
            ${["home", "library", "folder", "palette", "balls", "props"].map((n) => html`<button class=${classMap({ on: n === "balls" })} aria-label=${n}>${icon(n, 14)}</button>`)}
          </div>
        </section>
      </main>

      <div class="sheets">
        <div class="pager">
          ${["M2 1v6M7 1L3.500 4 7 7z", "M6 1L2.500 4 6 7z", "M2 1l3.500 3L2 7z", "M1 1l3.500 3L1 7zM6 1v6"].map((d) => html`<button aria-label="Scroll tabs"><svg width="8" height="8"><path d=${d} fill="currentColor" stroke="currentColor" /></svg></button>`)}
        </div>
        <button>Model</button><button>Motion Study 1</button>
        <button class="study-tab">${icon("tabStudy", 10)}Ready</button>
        <button class="on">${icon("tabStudy", 10)}ShearMoment</button>
      </div>
      <footer class="status">
        <span>SolidWorks Student Edition - Academic Use Only</span>
        <span class="push">Editing Part</span>
        <button class="units">IPS <span class="flip">${caret}</span></button>
        <button class="help" aria-label="Help">${icon("helpBox", 11)}</button>
        ${icon("tag", 13)}
      </footer>
    `;
  }
}
